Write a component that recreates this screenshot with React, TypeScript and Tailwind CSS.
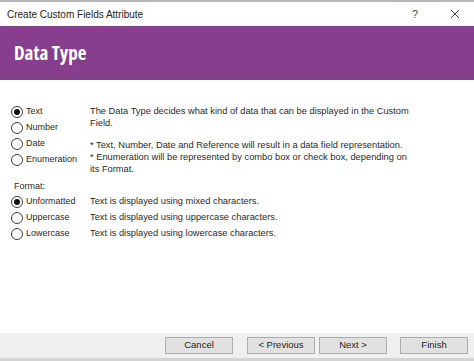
import type { ReactNode } from "react";

const font = { fontFamily: '"Liberation Sans", Arial, sans-serif' };

function Radio({ checked, label }: { checked?: boolean; label: string }) {
  return (
    <div className="flex h-[16px] items-center">
      <span className="flex h-[12px] w-[12px] items-center justify-center rounded-full border border-[#3c3c3c] bg-white">
        {checked && <span className="h-[6px] w-[6px] rounded-full bg-[#111]" />}
      </span>
      <span className="ml-[3px] text-[9px] text-[#2a2a2a]">{label}</span>
    </div>
  );
}

function Button({ children, className = "" }: { children: ReactNode; className?: string }) {
  return (
    <button
      className={`flex h-[17px] w-[68px] items-center justify-center border border-[#adadad] bg-[#e1e1e1] text-[9.5px] text-[#1e1e1e] ${className}`}
    >
      {children}
    </button>
  );
}

const formats: [string, string, boolean][] = [
  ["Unformatted", "mixed", true],
  ["Uppercase", "uppercase", false],
  ["Lowercase", "lowercase", false],
];

export default function App() {
  return (
    <div className="flex h-[361px] w-[474px] flex-col bg-white" style={font}>
      <div className="h-[2px] bg-[#b4b4b4]" />
      <div className="flex h-[24px] items-center pl-[7px] pr-[14px] text-[10px] text-[#222]">
        <span>Create Custom Fields Attribute</span>
        <span className="ml-auto mr-[32px] text-[11px] text-[#444]">?</span>
        <svg width="10" height="10" viewBox="0 0 10 10" className="text-[#333]">
          <path d="M1 1L9 9M9 1L1 9" stroke="currentColor" strokeWidth="0.9" />
        </svg>
      </div>
      <div className="flex h-[54px] items-center bg-[#873f8d] pl-[14px]">
        <h1
          className="text-[19px] font-bold text-white"
          style={{ fontFamily: '"Open Sans", sans-serif', fontStretch: "75%" }}
        >
          Data Type
        </h1>
      </div>
      <div className="flex-1 pl-[11px] pt-[24px]">
        <div className="flex">
          <div className="w-[79px]">
            <Radio checked label="Text" />
            <Radio label="Number" />
            <Radio label="Date" />
            <Radio label="Enumeration" />
          </div>
          <div className="mt-[1px] text-[9.3px] leading-[12px] text-[#2a2a2a]">
            <p>
              The Data Type decides what kind of data that can be displayed in the Custom
              <br />
              Field.
            </p>
            <p className="mt-[10px]">* Text, Number, Date and Reference will result in a data field representation.</p>
            <p>
              * Enumeration will be represented by combo box or check box, depending on
              <br />
              its Format.
            </p>
          </div>
        </div>
        <div className="mt-[4px] flex h-[15px] items-center pl-[3px] text-[9px] text-[#2a2a2a]">Format:</div>
        {formats.map(([label, kind, checked]) => (
          <div key={label} className="flex">
            <div className="w-[79px]">
              <Radio checked={checked} label={label} />
            </div>
            <div className="flex h-[16px] items-center text-[9.3px] text-[#2a2a2a]">
              Text is displayed using {kind} characters.
            </div>
          </div>
        ))}
      </div>
      <div className="flex h-[25px] items-center justify-end bg-[#f0f0f0] pr-[6px]">
        <Button>Cancel</Button>
        <Button className="ml-[14px]">&lt; Previous</Button>
        <Button className="ml-[4px]">Next &gt;</Button>
        <Button className="ml-[13px]">Finish</Button>
      </div>
      <div className="h-[3px] bg-[#d4d4d4]" />
    </div>
  );
}
